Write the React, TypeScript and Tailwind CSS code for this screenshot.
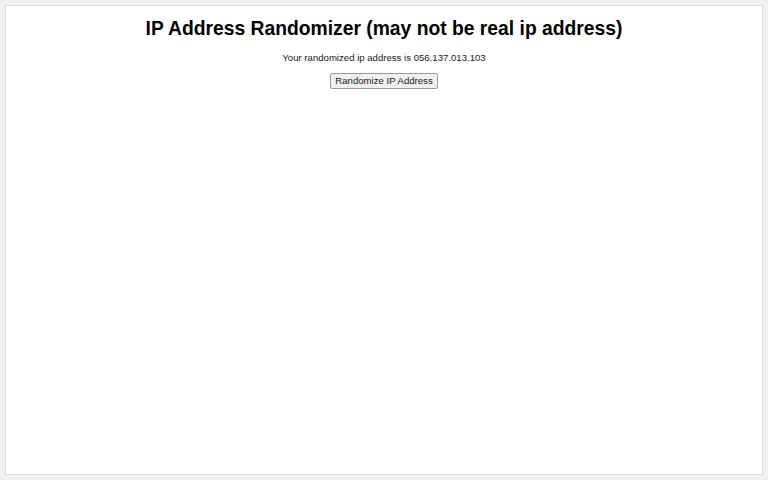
export default function App() {
  return (
    <div className="h-[480px] w-[768px] bg-[#f0f0f0] p-[5px] font-['Liberation_Sans',Arial,sans-serif]">
      <div className="flex h-full flex-col items-center border border-[#dcdcdc] bg-white pt-[10px]">
        <h1 className="text-[19.3px] font-bold leading-[26px] text-black">
          IP Address Randomizer (may not be real ip address)
        </h1>
        <p className="mt-[10px] text-[9.6px] leading-[12px] text-[#222]">
          Your randomized ip address is 056.137.013.103
        </p>
        <button className="mt-[9px] h-[16px] rounded-[2px] border border-[#999] bg-[#f0f0f0] px-[4px] text-[9.6px] leading-[12px] text-[#222]">
          Randomize IP Address
        </button>
      </div>
    </div>
  );
}
